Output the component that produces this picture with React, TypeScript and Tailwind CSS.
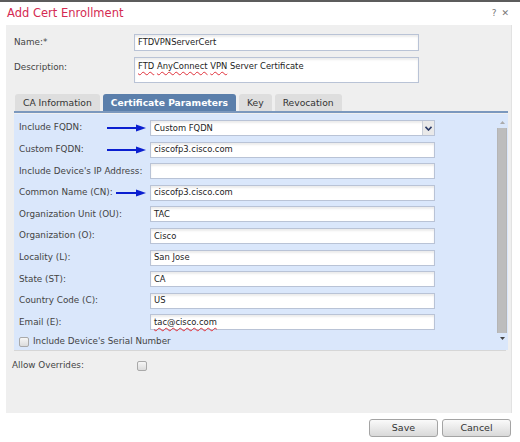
import React from "react"

interface Field {
    label: string
    value?: string
    arrow?: "long" | "short"
    spell?: boolean
    select?: boolean
}

const FIELDS: Array<Field> = [
    { label: "Include FQDN:", value: "Custom FQDN", arrow: "long", select: true },
    { label: "Custom FQDN:", value: "ciscofp3.cisco.com", arrow: "long" },
    { label: "Include Device's IP Address:" },
    { label: "Common Name (CN):", value: "ciscofp3.cisco.com", arrow: "short" },
    { label: "Organization Unit (OU):", value: "TAC" },
    { label: "Organization (O):", value: "Cisco" },
    { label: "Locality (L):", value: "San Jose" },
    { label: "State (ST):", value: "CA" },
    { label: "Country Code (C):", value: "US" },
    { label: "Email (E):", value: "tac@cisco.com", spell: true },
]

const TABS = ["CA Information", "Certificate Parameters", "Key", "Revocation"]

// blue pointer arrow drawn over the label column
function Arrow() {
    return (
        <span className="flex-1 flex items-center">
            <span className="flex-1 h-[2px] bg-[#0b1fd0]" />
            <svg width="10" height="8" viewBox="0 0 10 8" className="shrink-0 -ml-px">
                <polygon points="0,0.5 10,4 0,7.5" fill="#0b1fd0" />
            </svg>
        </span>
    )
}

function Box() {
    return (
        <span className="inline-block shrink-0 w-[10px] h-[10px] rounded-[2px] border border-[#a9a9a9] bg-gradient-to-b from-[#f6f6f6] to-[#dcdcdc]" />
    )
}

function Spell({ children }: { children: React.ReactNode }) {
    return <span className="underline decoration-wavy decoration-[#e0303a] decoration-1 underline-offset-2">{children}</span>
}

const inputCls = "h-[16px] border border-[#b9c3d6] bg-white shadow-[inset_0_2px_2px_rgba(0,0,0,0.08)] flex items-center px-[3px] text-[8.4px] text-[#222]"

export default function App() {
    return (
        <div className="w-[520px] h-[442px] bg-white border-t-2 border-[#5c5c5c] overflow-hidden text-[#444]" style={{ fontFamily: "'DejaVu Sans', Verdana, sans-serif" }}>
            {/* title bar */}
            <div className="h-[23px] flex items-center justify-between pl-[7px] pr-[11px]">
                <span className="text-[11.5px] text-[#d42a52]">Add Cert Enrollment</span>
                <span className="text-[9px] text-[#777] flex gap-[5px]">
                    <span>?</span>
                    <span>✕</span>
                </span>
            </div>

            {/* body */}
            <div className="mx-[6px] w-[506px] h-[388px] bg-[#efefef] border-r border-[#e2e2e2] pt-[9px] text-[8.8px]">
                <div className="flex items-center pl-[8px]">
                    <span className="w-[120px]">Name:*</span>
                    <div className={inputCls + " w-[285px] h-[17px]"}>FTDVPNServerCert</div>
                </div>
                <div className="flex items-start pl-[8px] mt-[6px]">
                    <span className="w-[120px] pt-[4px]">Description:</span>
                    <div className={inputCls + " w-[285px] h-[26px] items-start pt-[2px] text-[7.6px]"}>
                        <span><Spell>FTD</Spell> <Spell>AnyConnect</Spell> <Spell>VPN</Spell> Server Certificate</span>
                    </div>
                </div>

                {/* tabs */}
                <div className="flex items-end gap-[3px] pl-[9px] mt-[11px] h-[17px]">
                    {TABS.map((t, i) => (
                        <div
                            key={t}
                            className={
                                i === 1
                                    ? "h-[17px] px-[8px] flex items-center rounded-t-[3px] bg-[#5b7fab] text-white font-bold text-[9.2px]"
                                    : "h-[17px] px-[8px] flex items-center rounded-t-[3px] bg-[#dedede] text-[#333] text-[9.2px]"
                            }
                        >
                            {t}
                        </div>
                    ))}
                </div>
                <div className="ml-[8px] w-[494px] border-t-2 border-[#7b98be]">
                    <div className="mt-[1px] h-[236px] bg-[#dae7fb] grid grid-cols-[1fr_10px_1px]">
                        <div className="pl-[5px] pt-[6px]">
                            <div className="flex flex-col gap-[5.6px]">
                                {FIELDS.map((f) => (
                                    <div key={f.label} className="flex items-center">
                                        <div className="w-[131px] flex items-center pr-[4px]">
                                            <span className="whitespace-nowrap">{f.label}</span>
                                            {f.arrow === "long" && (
                                                <span className="ml-auto w-[39px] flex">
                                                    <Arrow />
                                                </span>
                                            )}
                                            {f.arrow === "short" && (
                                                <span className="ml-[3px] flex-1 flex">
                                                    <Arrow />
                                                </span>
                                            )}
                                        </div>
                                        <div className={inputCls + " w-[285px] justify-between pr-0"}>
                                            <span>{f.spell ? <Spell>{f.value}</Spell> : f.value}</span>
                                            {f.select && (
                                                <span className="w-[12px] h-full bg-[#e9e9e9] border-l border-[#c9cfd9] flex items-center justify-center">
                                                    <svg width="7" height="5" viewBox="0 0 7 5">
                                                        <path d="M0.5 0.8 L3.5 4 L6.5 0.8" stroke="#2a3a66" strokeWidth="1.6" fill="none" />
                                                    </svg>
                                                </span>
                                            )}
                                        </div>
                                    </div>
                                ))}
                            </div>
                            <div className="flex items-center gap-[4px] mt-[5px]">
                                <Box />
                                <span>Include Device's Serial Number</span>
                            </div>
                        </div>
                        {/* scrollbar */}
                        <div className="pt-[7px] flex flex-col items-stretch">
                            <svg width="5" height="3" viewBox="0 0 5 3" className="self-center"><polygon points="0,3 2.5,0 5,3" fill="#aaa" /></svg>
                            <div className="h-[205px] mt-[4px] mb-[4px] bg-[#bdbdbd] border-x border-[#b5b5b5]" />
                            <svg width="5" height="3" viewBox="0 0 5 3" className="self-center"><polygon points="0,0 2.5,3 5,0" fill="#444" /></svg>
                        </div>
                        <div />
                    </div>
                    <div className="h-px bg-[#d6d6d6] mr-[2px]" />
                </div>

                <div className="flex items-center pl-[6px] mt-[8px]">
                    <span className="w-[125px]">Allow Overrides:</span>
                    <Box />
                </div>
            </div>

            {/* footer */}
            <div className="flex justify-end gap-[4px] pr-[9px] pt-[6px]">
                {["Save", "Cancel"].map((b) => (
                    <button
                        key={b}
                        className="w-[69px] h-[18px] rounded-[3px] border border-[#a4a4a4] bg-gradient-to-b from-[#fafafa] to-[#d9d9d9] text-[9.5px] text-[#333]"
                    >
                        {b}
                    </button>
                ))}
            </div>
        </div>
    )
}
